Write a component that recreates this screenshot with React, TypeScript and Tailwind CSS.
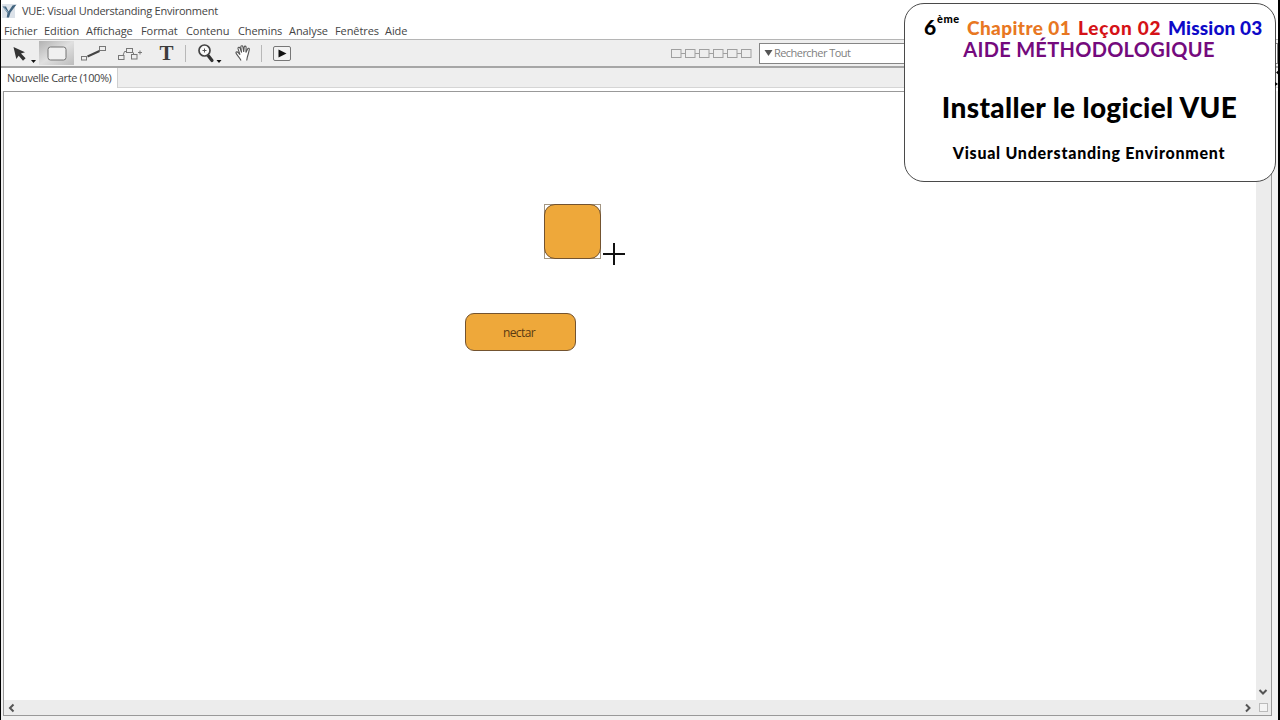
import { useState } from "react";
import type { ReactNode } from "react";

const MENUS = [
  { label: "Fichier", width: "w-10" },
  { label: "Edition", width: "w-[42px]" },
  { label: "Affichage", width: "w-[55px]" },
  { label: "Format", width: "w-[45px]" },
  { label: "Contenu", width: "w-[52px]" },
  { label: "Chemins", width: "w-[51px]" },
  { label: "Analyse", width: "w-[46px]" },
  { label: "Fenêtres", width: "w-[50px]" },
  { label: "Aide", width: "w-10" }
];

function VueLogo() {
  return (
    <svg width="16" height="16" viewBox="0 0 16 16">
      <rect x="1" y="1" width="13" height="14" fill="#dce2e9" />
      <path d="M1.500 3.500h3.500L7.500 8.500 11.500 2.500 15.500 1.500 9.500 9.500l-1.500 5H5.700L6.500 10z" fill="#42647f" />
      <path d="M2.500 4l4.500 5.500" stroke="#9fb9cc" strokeWidth="1" />
    </svg>
  );
}

function ToolButton({ width, active, onClick, children }: {
  width: string;
  active?: boolean;
  onClick?: () => void;
  children: ReactNode;
}) {
  return (
    <button
      onClick={onClick}
      className={`${width} flex h-[24px] shrink-0 items-center justify-center ${
        active ? "bg-linear-to-br from-[#b2b2b2] via-[#e0e0e0] to-[#bcbcbc]" : ""
      }`}
    >
      {children}
    </button>
  );
}

function Toolbar() {
  const [tool, setTool] = useState("node");

  return (
    <div className="flex h-[29px] shrink-0 items-center border-t border-b-2 border-t-[#b5b5b5] border-b-[#a6a6a6] bg-[#eeeeee]">
      <ToolButton width="w-[38px]" active={tool === "select"} onClick={() => setTool("select")}>
        <svg width="38" height="25" viewBox="0 0 38 25">
          <path d="M12.500 6l11.500 5.200-4 1.300 4.600 4.800-2.600 2.400-4.300-5-2.400 3.300z" fill="#333" />
          <path d="M30 19h5L32.500 22z" fill="#111" />
        </svg>
      </ToolButton>
      <ToolButton width="w-[35px]" active={tool === "node"} onClick={() => setTool("node")}>
        <svg width="35" height="25" viewBox="0 0 35 25">
          <rect x="9" y="6" width="18" height="13" rx="2.500" fill="#f0f0f0" stroke="#747474" />
        </svg>
      </ToolButton>
      <ToolButton width="w-[40px]" active={tool === "link"} onClick={() => setTool("link")}>
        <svg width="40" height="25" viewBox="0 0 40 25" fill="none" stroke="#777">
          <rect x="7.500" y="15.500" width="5" height="3.500" />
          <rect x="25.500" y="5.500" width="6" height="4" />
          <path d="M13.500 15.500l12-5.500" stroke="#444" strokeWidth="2" />
        </svg>
      </ToolButton>
      <ToolButton width="w-[34px]" active={tool === "combo"} onClick={() => setTool("combo")}>
        <svg width="34" height="25" viewBox="0 0 34 25" fill="none" stroke="#777">
          <rect x="4.500" y="14.500" width="5.500" height="4" />
          <rect x="12.500" y="7.500" width="6" height="4" />
          <rect x="17.500" y="13.500" width="5.500" height="4.500" />
          <path d="M9 14.500l1.500-4h2M18.500 10.500l1.500 3M24 11.500h4M26 9.500v4" />
        </svg>
      </ToolButton>
      <ToolButton width="w-[37px]" active={tool === "text"} onClick={() => setTool("text")}>
        <span className="font-['Liberation_Serif',serif] text-[21px] leading-none font-bold text-[#3c3c3c]">T</span>
      </ToolButton>
      <div className="h-[17px] w-px bg-[#b8b8b8]" />
      <ToolButton width="w-[38px]" active={tool === "zoom"} onClick={() => setTool("zoom")}>
        <svg width="38" height="25" viewBox="0 0 38 25" fill="none">
          <path d="M22.500 15l3.500 4.500" stroke="#333" strokeWidth="3.200" strokeLinecap="round" />
          <circle cx="18.500" cy="9.500" r="5.500" fill="#fafafa" stroke="#444" strokeWidth="1.700" />
          <path d="M16.500 9.500h4M18.500 7.500v4" stroke="#555" />
          <path d="M30.500 19h5L33 22z" fill="#111" />
        </svg>
      </ToolButton>
      <ToolButton width="w-[37px]" active={tool === "hand"} onClick={() => setTool("hand")}>
        <svg width="37" height="25" viewBox="0 0 37 25" fill="none">
          <path
            d="M17 19.500c-1-3-4-5-5-7.500-.3-1.400 1.500-1.500 2.300-.3l1.700 2-2-6c-.3-1.500 1.500-1.900 2-.6l1.600 4.400-.8-5.500c0-1.500 1.900-1.600 2.100-.2l.8 5.200.5-5c.3-1.300 1.900-1.100 1.900.3l-.2 5.200 1.700-3.600c.6-1.200 2.100-.5 1.700.8-.6 3-1.300 5.500-2 7.500l-.6 3.300"
            fill="#fff" stroke="#555" strokeWidth="1.100"
          />
        </svg>
      </ToolButton>
      <div className="h-[17px] w-px bg-[#b8b8b8]" />
      <ToolButton width="w-[38px]">
        <svg width="38" height="25" viewBox="0 0 38 25">
          <rect x="11.500" y="5.500" width="17" height="14" rx="1.500" fill="#f2f2f2" stroke="#777" />
          <path d="M16.500 8.500l8 4-8 4z" fill="#111" />
        </svg>
      </ToolButton>
      <svg className="ml-[371px] shrink-0" width="82" height="12" viewBox="0 0 82 12" fill="none" stroke="#a0a0a0">
        {[0, 1, 2, 3, 4, 5].map((i) => (
          <g key={i}>
            <rect x={i * 14 + 0.5} y="2.500" width="9.500" height="8" />
            {i < 5 && <path d={`M${i * 14 + 10} 6.500h4`} />}
          </g>
        ))}
      </svg>
      <div className="ml-[6px] flex h-[21px] flex-1 items-center border border-[#858585] bg-white">
        <svg className="ml-1 shrink-0" width="10" height="8" viewBox="0 0 10 8">
          <path d="M.5 1h8L4.500 7z" fill="#555" />
        </svg>
        <span className="text-[11px] tracking-[-0.55px] text-[#808080]">Rechercher Tout</span>
      </div>
    </div>
  );
}

function Chevron({ d }: { d: string }) {
  return (
    <svg width="14" height="14" viewBox="0 0 14 14" fill="none">
      <path d={d} stroke="#555" strokeWidth="2" />
    </svg>
  );
}

function MapCanvas() {
  return (
    <div className="relative flex-1 overflow-hidden bg-white">
      <div className="absolute top-[112px] left-[540px] h-[55px] w-[57px] border border-[#a39683] bg-white">
        <div className="absolute -inset-px rounded-[11px] border border-[#735330] bg-[#eea83a]" />
      </div>
      <div className="absolute top-[221px] left-[461px] flex h-[38px] w-[111px] items-center justify-center rounded-[9px] border border-[#735330] bg-[#eea83a]">
        <span className="pt-[2px] pr-[3px] text-[12px] leading-none tracking-[-0.6px] text-[#5a3a12]">nectar</span>
      </div>
      {/* crosshair cursor */}
      <svg className="absolute top-[151px] left-[599px]" width="22" height="22" viewBox="0 0 22 22">
        <path d="M0 11h22M11 0v22" stroke="#111" strokeWidth="2" />
      </svg>
    </div>
  );
}

function TitleCard() {
  return (
    <div className="absolute top-[3px] left-[903px] flex h-[179px] w-[372px] flex-col items-center rounded-[20px] border border-[#4a4a4a] bg-white font-['Lato','Open_Sans',sans-serif] font-black whitespace-nowrap text-black">
      <div className="mt-[12px] flex h-[23px] w-[340px] items-center pl-[4px] text-[19px] leading-[23px]">
        <span className="-mt-[3px] w-[13px] shrink-0 text-[21px]">6</span>
        <span className="-mt-[19px] w-[30px] shrink-0 text-[11px] tracking-[0.5px]">ème</span>
        <span className="-mt-px w-[111px] shrink-0 tracking-[0.4px] text-[#e87722]">Chapitre 01</span>
        <span className="w-[90px] shrink-0 tracking-[0.8px] text-[#d51217]">Leçon 02</span>
        <span className="shrink-0 tracking-[0.15px] text-[#0d09c8]">Mission 03</span>
      </div>
      <div className="-mt-px -ml-[2px] text-[20px] leading-[22px] font-bold tracking-[0.3px] text-[#740a7d]">AIDE MÉTHODOLOGIQUE</div>
      <div className="mt-[29px] -ml-px text-[28px] leading-[36px] tracking-[0.35px]">Installer le logiciel VUE</div>
      <div className="mt-[18px] -ml-[2px] text-[16px] leading-[20px] tracking-[0.74px]">Visual Understanding Environment</div>
    </div>
  );
}

export default function App() {
  return (
    <div className="relative flex h-[720px] w-[1280px] flex-col overflow-hidden border-r-2 border-l border-black bg-[#f1f1f1] font-['Open_Sans','Noto_Sans',sans-serif] text-[#444]">
      <header className="flex h-[22px] shrink-0 items-center bg-white">
        <VueLogo />
        <span className="ml-[5px] text-[11px] tracking-[-0.24px] whitespace-nowrap">VUE: Visual Understanding Environment</span>
      </header>
      <nav className="flex h-[17px] shrink-0 items-center bg-white pb-px pl-[3px] text-[11px] leading-none tracking-[-0.08px]">
        {MENUS.map((menu) => (
          <button key={menu.label} className={`${menu.width} shrink-0 text-left whitespace-nowrap`}>
            {menu.label}
          </button>
        ))}
      </nav>
      <Toolbar />
      <div className="flex h-[20px] shrink-0 bg-[#eeeeee]">
        <div className="flex w-[117px] shrink-0 items-center border-r border-[#cfcfcf] bg-white pl-[6px] text-[11px] tracking-[-0.4px] whitespace-nowrap">
          Nouvelle Carte (100%)
        </div>
        <div className="flex-1 border-b border-[#d5d5d5]" />
      </div>
      <div className="h-[3px] shrink-0 bg-white" />
      <main className="mr-[6px] ml-[2px] flex h-[625px] shrink-0 flex-col border border-[#999]">
        <div className="flex min-h-0 flex-1">
          <MapCanvas />
          <div className="flex w-[15px] shrink-0 items-end bg-[#ececec]">
            <Chevron d="M3.500 4l3.500 3.500L10.500 4" />
          </div>
        </div>
        <div className="flex h-[15px] shrink-0 items-center justify-between bg-[#ececec]">
          <Chevron d="M9.500 3.500L6 7 9.500 10.500" />
          <div className="flex items-center">
            <Chevron d="M6 3.500L9.500 7 6 10.500" />
            <div className="mr-[3px] ml-[5px] size-[9px] border border-[#bbb] bg-[#f4f4f4]" />
          </div>
        </div>
      </main>
      <TitleCard />
      {/* tip of the resize cursor */}
      <svg className="absolute top-[68px] -right-[2px]" width="5" height="20" viewBox="0 0 5 20">
        <path d="M5 1L1 4.500 5 8M0 14l3 2-3 2z" fill="#000" />
      </svg>
    </div>
  );
}
